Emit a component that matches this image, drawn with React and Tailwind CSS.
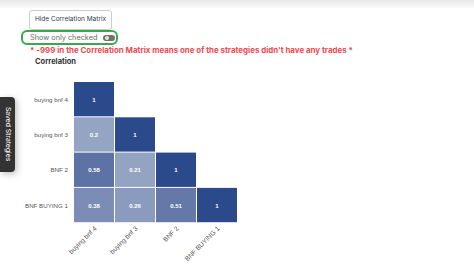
import React from 'react';

const rows = ['buying bnf 4', 'buying bnf 3', 'BNF 2', 'BNF BUYING 1'];

const cells = [
  [{ v: '1', c: '#2b4a8b' }],
  [{ v: '0.2', c: '#94a4c3' }, { v: '1', c: '#2b4a8b' }],
  [{ v: '0.58', c: '#5e73a5' }, { v: '0.21', c: '#93a3c2' }, { v: '1', c: '#2b4a8b' }],
  [{ v: '0.38', c: '#7b8db6' }, { v: '0.26', c: '#8b9bbd' }, { v: '0.51', c: '#6579a9' }, { v: '1', c: '#2b4a8b' }],
];

const X0 = 74;
const Y0 = 82;
const CW = 41;
const CH = 35.3;
const LABEL_FONT = "'Liberation Sans', Arial, sans-serif";

const Heatmap = () => (
  <svg width="260" height="190" viewBox="0 76 260 190" className="block mt-[9px]">
    {rows.map((r, i) => (
      <text
        key={r}
        x={68}
        y={Y0 + i * CH + CH / 2 + 2}
        textAnchor="end"
        fontSize="6.2"
        fill="#555"
        fontFamily={LABEL_FONT}
      >
        {r}
      </text>
    ))}
    {cells.map((row, i) =>
      row.map((cell, j) => (
        <g key={`${i}-${j}`}>
          <rect
            x={X0 + j * CW}
            y={Y0 + i * CH}
            width={CW - 1}
            height={CH - 1}
            fill={cell.c}
          />
          <text
            x={X0 + j * CW + (CW - 1) / 2}
            y={Y0 + i * CH + CH / 2 + 2}
            textAnchor="middle"
            fontSize="6"
            fontWeight="700"
            fill="#fff"
            fontFamily={LABEL_FONT}
          >
            {cell.v}
          </text>
        </g>
      ))
    )}
    {rows.map((r, j) => {
      const x = X0 + j * CW + 23;
      const y = 229;
      return (
        <text
          key={`c-${r}`}
          x={x}
          y={y}
          textAnchor="end"
          fontSize="6.6"
          fill="#555"
          fontFamily={LABEL_FONT}
          transform={`rotate(-45 ${x} ${y})`}
        >
          {r}
        </text>
      );
    })}
  </svg>
);

export default function App() {
  return (
    <div className="relative w-[474px] h-[276px] overflow-hidden bg-white font-['Inter',sans-serif]">
      <div className="h-[8px] bg-gradient-to-b from-[#e9e9e9] to-[#fafafa]" />
      <div className="flex pl-[29px] pt-[2px]">
        <button className="w-[83px] h-[20px] border border-[#c9ced6] rounded-[3px] bg-white text-[6.5px] text-[#2f3a4f] shadow-[0_1px_1px_rgba(0,0,0,0.05)]">
          Hide Correlation Matrix
        </button>
      </div>
      <div className="ml-[21px] w-[97px] h-[15px] border-2 border-[#3aa84e] rounded-[6px] flex items-center pl-[7px] gap-[6px]">
        <span className="text-[7.3px] text-[#6b6b6b] leading-none whitespace-nowrap">Show only checked</span>
        <span className="w-[12px] h-[6px] rounded-full bg-[#707070] flex items-center pl-[1.5px]">
          <span className="w-[4px] h-[4px] rounded-full bg-[#e5e5e5]" />
        </span>
      </div>
      <p className="pl-[30px] text-[7.9px] font-bold text-[#ef4a52] leading-[10px] whitespace-nowrap">
        * -999 in the Correlation Matrix means one of the strategies didn't have any trades *
      </p>
      <p className="pl-[35px] mt-[1px] text-[7.5px] font-bold text-[#333] leading-[11px]">Correlation</p>
      <Heatmap />
      <div className="absolute left-0 top-[97px] w-[15px] h-[75px] bg-[#333] rounded-r-[4px] shadow-[2px_2px_6px_rgba(0,0,0,0.25)] flex items-center justify-center">
        <span className="[writing-mode:vertical-rl] text-[6.8px] text-white whitespace-nowrap leading-none">
          Saved Strategies
        </span>
      </div>
    </div>
  );
}
